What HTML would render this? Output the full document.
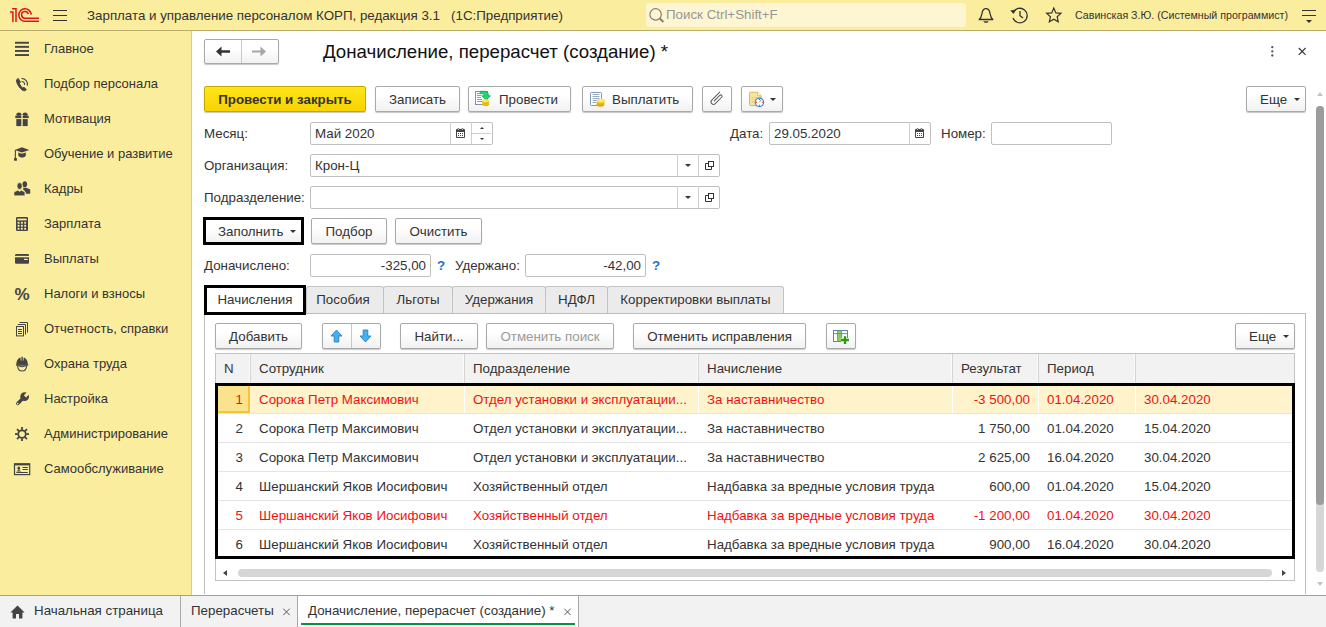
<!DOCTYPE html>
<html lang="ru">
<head>
<meta charset="utf-8">
<title>Доначисление, перерасчет (создание) *</title>
<style>
*{box-sizing:border-box;margin:0;padding:0}
html,body{width:1326px;height:627px;overflow:hidden;background:#fff;font-family:"Liberation Sans",sans-serif;font-size:13.33px;color:#333}
.abs{position:absolute}
#top{position:absolute;left:0;top:0;width:1326px;height:31px;background:#fbed9e;border-bottom:1px solid #b9ad6b}
#side{position:absolute;left:0;top:31px;width:192px;height:564px;background:#fbed9e;border-right:1px solid #d9cc84}
#main{position:absolute;left:192px;top:31px;width:1134px;height:564px;background:#fff}
#bottom{position:absolute;left:0;top:595px;width:1326px;height:32px;background:#f2f2f2;border-top:1px solid #a0a0a0}
.t{position:absolute;white-space:nowrap;line-height:1}
.btn{position:absolute;height:26px;border:1px solid #a9a9a9;border-radius:2px;background:linear-gradient(#fff 35%,#f1f1f1);box-shadow:0 1px 1px rgba(0,0,0,.22);font-size:13.33px;color:#333;text-align:center;line-height:26px;white-space:nowrap}
.inp{position:absolute;height:23px;border:1px solid #c0c0c0;border-radius:2px;background:#fff;font-size:13.33px;line-height:22px;color:#333;white-space:nowrap;padding-left:4px}
.lbl{position:absolute;font-size:13.33px;color:#333;white-space:nowrap;line-height:16px}
.nav{position:absolute;left:44px;font-size:13px;color:#333;white-space:nowrap;line-height:16px}
.ico{position:absolute}
.tab{position:absolute;top:255px;height:27px;border:1px solid #c3c3c3;border-bottom:none;border-radius:3px 3px 0 0;background:#ebebeb;font-size:13.33px;line-height:25px;text-align:center;color:#333;white-space:nowrap}
.cell{position:absolute;font-size:13.33px;line-height:16px;white-space:nowrap;color:#333}
.red{color:#ee1212}
.caret{display:inline-block;width:0;height:0;border-left:3px solid transparent;border-right:3px solid transparent;border-top:3px solid #333;vertical-align:middle}
</style>
</head>
<body>
<div id="top">
<svg class="ico" style="left:0;top:0" width="46" height="30" viewBox="0 0 46 30" fill="none" stroke="#d9161c" stroke-width="1.5">
<path d="M12.1 8.7 H16 V21.9"/>
<path d="M10 12 H12.9 V21.9"/>
<path d="M31.2 14.6 A6.2 6.2 0 1 0 25 21.2 H39"/>
<path d="M28.2 14.2 A3.35 3.35 0 1 0 25.1 18.2 H39"/>
</svg>
<div class="abs" style="left:53px;top:10px;width:14px;height:1px;background:#333"></div>
<div class="abs" style="left:53px;top:15px;width:14px;height:1px;background:#333"></div>
<div class="abs" style="left:53px;top:20px;width:14px;height:1px;background:#333"></div>
<div class="t" style="left:87px;top:9px;font-size:13.33px;color:#333">Зарплата и управление персоналом КОРП, редакция 3.1 &nbsp; (1С:Предприятие)</div>
<div class="abs" style="left:646px;top:3px;width:320px;height:24px;background:#fef6d3;border-radius:3px"></div>
<svg class="ico" style="left:648px;top:6px" width="18" height="18" viewBox="0 0 18 18" fill="none" stroke="#85806c" stroke-width="1.2"><circle cx="7.6" cy="8.4" r="5.7"/><path d="M11.8 12.6 L15.4 16" stroke-width="2"/></svg>
<div class="t" style="left:666px;top:8px;font-size:13.33px;color:#969696">Поиск Ctrl+Shift+F</div>
<svg class="ico" style="left:977px;top:6px" width="18" height="20" viewBox="0 0 18 20" fill="none" stroke="#333" stroke-width="1.3"><path d="M2.2 13.5 H15.8 C13.6 11.6 13.4 9.6 13 7.4 C12.6 4.6 11.4 2.6 9 2.6 C6.6 2.6 5.4 4.6 5 7.4 C4.6 9.6 4.4 11.6 2.2 13.5 Z" stroke-linejoin="round"/><path d="M6.4 15.2 H11.6 C11 17.4 7 17.4 6.4 15.2 Z" fill="#333" stroke="none"/></svg>
<svg class="ico" style="left:1010px;top:5px" width="20" height="21" viewBox="0 -0.5 20 21" fill="none" stroke="#333" stroke-width="1.3"><path d="M3.2 7.2 A7.3 7.3 0 1 1 3 12.4"/><path d="M0.8 5.2 L3.4 8 L5.6 4.6 Z" fill="#333" stroke-width=".6"/><path d="M10 5.5 V10.3 L13 12.6"/></svg>
<svg class="ico" style="left:1044px;top:5px" width="20" height="20" viewBox="0 0 20 20" fill="none" stroke="#333" stroke-width="1.3" stroke-linejoin="miter"><path transform="translate(9.8 10.3) scale(0.9) translate(-10 -10.3)" d="M10 2.2 L12.3 7.6 L18 8.1 L13.7 11.9 L15 17.6 L10 14.6 L5 17.6 L6.3 11.9 L2 8.1 L7.7 7.6 Z"/></svg>
<div class="t" style="left:1075px;top:10px;font-size:10.67px;color:#333">Савинская З.Ю. (Системный программист)</div>
<div class="abs" style="left:1302px;top:10px;width:14px;height:1px;background:#333"></div>
<div class="abs" style="left:1302px;top:15px;width:14px;height:1px;background:#333"></div>
<div class="abs" style="left:1306px;top:20px;width:0;height:0;border-left:3px solid transparent;border-right:3px solid transparent;border-top:3px solid #333"></div>
</div>
<div id="side">
<div class="abs" style="left:0;top:0px;width:191px;height:35px"><svg class="ico" style="left:8px;top:5px" width="28" height="28" viewBox="0 0 28 28" fill="#444"><rect x="7" y="5.8" width="14" height="1.9"/><rect x="7" y="9.9" width="14" height="1.9"/><rect x="7" y="14" width="14" height="1.9"/><rect x="7" y="18.1" width="14" height="1.9"/></svg><div class="nav" style="top:10px">Главное</div></div>
<div class="abs" style="left:0;top:35px;width:191px;height:35px"><svg class="ico" style="left:8px;top:5px" width="28" height="28" viewBox="0 0 28 28" fill="none" stroke="#444"><path d="M10.2 7.4 C8.6 8.2 8.2 9.6 8.8 11.4 C9.8 14.4 12 17.4 14.6 19.2 C16 20.1 17.4 19.9 18.4 18.6 L16 16.4 L14.6 17 C13.4 16 12 14 11.4 12.4 L12.4 11.2 Z" fill="#444" stroke-width="1" stroke-linejoin="round"/><path d="M13.4 10.2 A3.4 3.4 0 0 1 16.6 14" stroke-width="1.1"/><path d="M13.6 7.4 A6 6 0 0 1 19.4 14.6" stroke-width="1.1"/></svg><div class="nav" style="top:10px">Подбор персонала</div></div>
<div class="abs" style="left:0;top:70px;width:191px;height:35px"><svg class="ico" style="left:8px;top:5px" width="28" height="28" viewBox="0 0 28 28" fill="#444"><rect x="7.3" y="9.6" width="6" height="2.5"/><rect x="14.7" y="9.6" width="6" height="2.5"/><rect x="8.3" y="13.1" width="5" height="7"/><rect x="14.7" y="13.1" width="5" height="7"/><ellipse cx="10.9" cy="8.2" rx="2.5" ry="1.8"/><ellipse cx="17.1" cy="8.2" rx="2.5" ry="1.8"/></svg><div class="nav" style="top:10px">Мотивация</div></div>
<div class="abs" style="left:0;top:105px;width:191px;height:35px"><svg class="ico" style="left:8px;top:5px" width="28" height="28" viewBox="0 0 28 28" fill="#444"><path d="M14 6.2 L21.3 8.9 L14 11.5 L6.7 8.9 Z"/><path d="M10.3 11.4 L14 12.7 L17.8 11.4 V14.8 C16.6 17.2 11.5 17.2 10.3 14.8 Z"/><rect x="6.8" y="9" width="1.1" height="8.6"/><rect x="6" y="17.1" width="2.9" height="2.6"/></svg><div class="nav" style="top:10px">Обучение и развитие</div></div>
<div class="abs" style="left:0;top:140px;width:191px;height:35px"><svg class="ico" style="left:8px;top:5px" width="28" height="28" viewBox="0 0 28 28" fill="#444"><ellipse cx="16.8" cy="8.2" rx="2.3" ry="3"/><path d="M15.2 11.8 H18.4 L22.2 13.6 V17.8 H18 C17.6 15.6 16 14 15.2 13.4 Z"/><ellipse cx="11.6" cy="10" rx="2.7" ry="3.4" stroke="#fbed9e" stroke-width=".8"/><path d="M6 19.8 V16 L9.8 14.2 L11.6 15.4 L13.4 14.2 L16.9 16 V19.8 Z" stroke="#fbed9e" stroke-width=".6"/></svg><div class="nav" style="top:10px">Кадры</div></div>
<div class="abs" style="left:0;top:175px;width:191px;height:35px"><svg class="ico" style="left:8px;top:4px" width="28" height="28" viewBox="0 0 28 28"><rect x="8" y="7" width="12" height="14" rx="1.2" fill="#444"/><g fill="#fbed9e"><rect x="9.4" y="8.6" width="9.2" height="1.8"/><rect x="9.6" y="11.8" width="1.9" height="1.9"/><rect x="12.9" y="11.8" width="1.9" height="1.9"/><rect x="16.2" y="11.8" width="1.9" height="1.9"/><rect x="9.6" y="14.8" width="1.9" height="1.9"/><rect x="12.9" y="14.8" width="1.9" height="1.9"/><rect x="16.2" y="14.8" width="1.9" height="1.9"/><rect x="9.6" y="17.8" width="1.9" height="1.9"/><rect x="12.9" y="17.8" width="1.9" height="1.9"/><rect x="16.2" y="17.8" width="1.9" height="1.9"/></g></svg><div class="nav" style="top:10px">Зарплата</div></div>
<div class="abs" style="left:0;top:210px;width:191px;height:35px"><svg class="ico" style="left:8px;top:4px" width="28" height="28" viewBox="0 0 28 28"><rect x="7" y="9" width="14" height="9.8" rx="1.2" fill="#444"/><rect x="7" y="10.9" width="14" height="1.4" fill="#fbed9e"/><rect x="16" y="13.8" width="3.8" height="1.2" fill="#fbed9e"/></svg><div class="nav" style="top:10px">Выплаты</div></div>
<div class="abs" style="left:0;top:245px;width:191px;height:35px"><div class="ico" style="left:14px;top:10px;width:16px;font:bold 17px/17px 'Liberation Sans',sans-serif;color:#444;text-align:center">%</div><div class="nav" style="top:10px">Налоги и взносы</div></div>
<div class="abs" style="left:0;top:280px;width:191px;height:35px"><svg class="ico" style="left:8px;top:4px" width="28" height="28" viewBox="0 0 28 28" fill="none" stroke="#444" stroke-width="1"><path d="M11.6 7.5 H19.5 V17.6"/><path d="M9.8 9.5 H17.5 V19.6"/><rect x="8.5" y="11.5" width="7" height="9.4"/><path d="M10 14.5 H14 M10 16.5 H14 M10 18.5 H14" stroke-width="1.1"/></svg><div class="nav" style="top:10px">Отчетность, справки</div></div>
<div class="abs" style="left:0;top:315px;width:191px;height:35px"><svg class="ico" style="left:8px;top:5px" width="28" height="28" viewBox="0 0 28 28"><g transform="translate(0 -1.2)"><path d="M8.4 15 C8.2 10.6 10.4 8.2 12.4 7.6 L12.9 11 H13.4 V7 H14.8 V11 H15.3 L15.8 7.6 C17.8 8.2 20 10.6 19.8 15 Z" fill="#444"/><rect x="7.8" y="14.4" width="12.6" height="1.6" rx=".8" fill="#444"/><path d="M9.6 16.2 C9.8 19.4 11.8 21.2 14.1 21.2 C16.4 21.2 18.4 19.4 18.6 16.2" fill="none" stroke="#444" stroke-width="1.1"/><path d="M9.8 15.6 C12 17.4 16.2 17.4 18.4 15.6" fill="none" stroke="#444" stroke-width="1"/></g></svg><div class="nav" style="top:10px">Охрана труда</div></div>
<div class="abs" style="left:0;top:350px;width:191px;height:35px"><svg class="ico" style="left:8px;top:5px" width="28" height="28" viewBox="0 0 28 28"><g transform="translate(16.6 10.7) rotate(45)"><circle cx="0" cy="0" r="4.4" fill="#444"/><rect x="-1.7" y="0" width="3.4" height="11.4" rx="1.7" fill="#444"/><rect x="-1.5" y="-5.5" width="3" height="5" fill="#fbed9e"/><circle cx="0" cy="9.8" r=".8" fill="#fbed9e"/></g></svg><div class="nav" style="top:10px">Настройка</div></div>
<div class="abs" style="left:0;top:385px;width:191px;height:35px"><svg class="ico" style="left:8px;top:5px" width="28" height="28" viewBox="0 0 28 28" fill="none" stroke="#444"><circle cx="14" cy="13.1" r="3.8" stroke-width="1.8"/><g stroke-width="1.8"><path d="M14 6.1 V8.7" transform="rotate(0 14 13.1)"/><path d="M14 6.1 V8.7" transform="rotate(45 14 13.1)"/><path d="M14 6.1 V8.7" transform="rotate(90 14 13.1)"/><path d="M14 6.1 V8.7" transform="rotate(135 14 13.1)"/><path d="M14 6.1 V8.7" transform="rotate(180 14 13.1)"/><path d="M14 6.1 V8.7" transform="rotate(225 14 13.1)"/><path d="M14 6.1 V8.7" transform="rotate(270 14 13.1)"/><path d="M14 6.1 V8.7" transform="rotate(315 14 13.1)"/></g></svg><div class="nav" style="top:10px">Администрирование</div></div>
<div class="abs" style="left:0;top:420px;width:191px;height:35px"><svg class="ico" style="left:8px;top:5px" width="28" height="28" viewBox="0 0 28 28" fill="none" stroke="#444"><g transform="translate(0 -1)"><rect x="6.5" y="8.8" width="15.2" height="10.8" stroke-width="1.2"/><path d="M6.5 9.5 H21.7" stroke-width="1.8"/><ellipse cx="10.8" cy="13.2" rx="1.3" ry="1.7" fill="#444" stroke="none"/><path d="M8.6 16.4 C9.2 14.8 12.4 14.8 13 16.4 Z" fill="#444" stroke="none"/><path d="M14.6 12.5 H19.8 M14.6 14.5 H19.8 M8.4 17.5 H19.8" stroke-width="1"/></g></svg><div class="nav" style="top:10px">Самообслуживание</div></div>
</div>
<div id="main">
<div class="btn" style="left:12px;top:8px;width:75px;height:25px"></div>
<div class="abs" style="left:49px;top:9px;width:1px;height:23px;background:#c8c8c8"></div>
<svg class="ico" style="left:23px;top:14px" width="16" height="13" viewBox="0 0 16 13"><path d="M1 6.5 L6.5 1.5 V5.2 H15 V7.8 H6.5 V11.5 Z" fill="#333"/></svg>
<svg class="ico" style="left:59px;top:14px" width="16" height="13" viewBox="0 0 16 13"><path d="M15 6.5 L9.5 1.5 V5.4 H1 V7.6 H9.5 V11.5 Z" fill="#a6a6a6"/></svg>
<div class="t" style="left:131px;top:12px;font-size:18.67px;color:#111">Доначисление, перерасчет (создание) *</div>
<svg class="ico" style="left:1076px;top:13px" width="8" height="14" viewBox="0 0 8 14" fill="#555"><circle cx="4.3" cy="3.2" r="1.15"/><circle cx="4.3" cy="7.4" r="1.15"/><circle cx="4.3" cy="11.5" r="1.15"/></svg>
<svg class="ico" style="left:1104px;top:14px" width="11" height="11" viewBox="0 0 11 11" stroke="#333" stroke-width="1.1"><path d="M2.8 3 L9.6 9.8 M9.6 3 L2.8 9.8"/></svg>
<div class="btn" style="left:12px;top:55px;width:162px;background:linear-gradient(#ffe619,#f7d300);border-color:#c5a800;font-weight:bold;color:#333">Провести и закрыть</div>
<div class="btn" style="left:183px;top:55px;width:85px">Записать</div>
<div class="btn" style="left:276px;top:55px;width:103px;text-align:left;padding-left:30px">Провести</div>
<div class="btn" style="left:390px;top:55px;width:111px;text-align:left;padding-left:29px">Выплатить</div>
<div class="btn" style="left:510px;top:55px;width:30px"></div>
<div class="btn" style="left:549px;top:55px;width:42px"></div>
<div class="btn" style="left:1054px;top:55px;width:60px;text-align:left;padding-left:13px">Еще</div>
<div class="caret abs" style="left:1102px;top:67px"></div>
<div class="caret abs" style="left:578px;top:67px"></div>
<div class="lbl" style="left:12px;top:95px">Месяц:</div>
<div class="inp" style="left:118px;top:91px;width:183px">Май 2020</div>
<div class="abs" style="left:258px;top:91px;width:1px;height:22px;background:#d0d0d0"></div>
<div class="abs" style="left:279px;top:91px;width:1px;height:22px;background:#d0d0d0"></div>
<div class="abs" style="left:280px;top:102px;width:19px;height:1px;background:#d0d0d0"></div>
<div class="abs" style="left:288px;top:96px;width:0;height:0;border-left:2px solid transparent;border-right:2px solid transparent;border-bottom:2px solid #333"></div>
<div class="abs" style="left:288px;top:107px;width:0;height:0;border-left:2px solid transparent;border-right:2px solid transparent;border-top:2px solid #333"></div>
<div class="lbl" style="left:538px;top:95px">Дата:</div>
<div class="inp" style="left:577px;top:91px;width:162px">29.05.2020</div>
<div class="abs" style="left:717px;top:91px;width:1px;height:22px;background:#d0d0d0"></div>
<div class="lbl" style="left:749px;top:95px">Номер:</div>
<div class="inp" style="left:799px;top:91px;width:121px"></div>
<div class="lbl" style="left:12px;top:127px">Организация:</div>
<div class="inp" style="left:118px;top:123px;width:410px">Крон-Ц</div>
<div class="abs" style="left:485px;top:123px;width:1px;height:22px;background:#d0d0d0"></div>
<div class="abs" style="left:506px;top:123px;width:1px;height:22px;background:#d0d0d0"></div>
<div class="caret abs" style="left:493px;top:133px"></div>
<svg class="ico" style="left:512px;top:129px" width="11" height="11" viewBox="0 0 11 11" fill="none" stroke="#333" stroke-width="1"><rect x="4.5" y="1.5" width="5" height="5" fill="#fff"/><path d="M4.5 3.5 H1.5 V9.5 H7.5 V6.5"/></svg>
<div class="lbl" style="left:12px;top:159px">Подразделение:</div>
<div class="inp" style="left:118px;top:155px;width:410px"></div>
<div class="abs" style="left:485px;top:155px;width:1px;height:22px;background:#d0d0d0"></div>
<div class="abs" style="left:506px;top:155px;width:1px;height:22px;background:#d0d0d0"></div>
<div class="caret abs" style="left:493px;top:165px"></div>
<svg class="ico" style="left:512px;top:161px" width="11" height="11" viewBox="0 0 11 11" fill="none" stroke="#333" stroke-width="1"><rect x="4.5" y="1.5" width="5" height="5" fill="#fff"/><path d="M4.5 3.5 H1.5 V9.5 H7.5 V6.5"/></svg>
<div class="btn" style="left:11px;top:186px;width:101px;height:28px;border:3px solid #000;border-radius:0;text-align:left;padding-left:12px;line-height:24px;box-shadow:none">Заполнить</div>
<div class="caret abs" style="left:98px;top:199px"></div>
<div class="btn" style="left:119px;top:187px;width:76px">Подбор</div>
<div class="btn" style="left:203px;top:187px;width:87px">Очистить</div>
<div class="lbl" style="left:12px;top:227px">Доначислено:</div>
<div class="inp" style="left:118px;top:223px;width:121px;text-align:right;padding-right:4px">-325,00</div>
<div class="lbl" style="left:245px;top:227px;color:#1a73c8;font-weight:bold">?</div>
<div class="lbl" style="left:263px;top:227px">Удержано:</div>
<div class="inp" style="left:333px;top:223px;width:121px;text-align:right;padding-right:4px">-42,00</div>
<div class="lbl" style="left:460px;top:227px;color:#1a73c8;font-weight:bold">?</div>
<div class="abs" style="left:12px;top:282px;width:1102px;height:281px;border:1px solid #bdbdbd;border-bottom:none"></div>
<div class="tab" style="left:114px;width:78px;padding-right:4px">Пособия</div>
<div class="tab" style="left:191px;width:70px">Льготы</div>
<div class="tab" style="left:260px;width:94px">Удержания</div>
<div class="tab" style="left:353px;width:63px">НДФЛ</div>
<div class="tab" style="left:415px;width:177px">Корректировки выплаты</div>
<div class="abs" style="left:12px;top:254px;width:102px;height:30px;border:3px solid #000;background:#fff;font-size:13.33px;line-height:23px;text-align:center;color:#333">Начисления</div>
<div class="btn" style="left:23px;top:292px;width:87px;">Добавить</div>
<div class="btn" style="left:130px;top:292px;width:59px;"></div>
<div class="abs" style="left:159px;top:293px;width:1px;height:24px;background:#c8c8c8"></div>
<div class="btn" style="left:208px;top:292px;width:78px;">Найти...</div>
<div class="btn" style="left:294px;top:292px;width:128px;color:#9a9a9a">Отменить поиск</div>
<div class="btn" style="left:441px;top:292px;width:173px;">Отменить исправления</div>
<div class="btn" style="left:634px;top:292px;width:30px;"></div>
<div class="btn" style="left:1043px;top:292px;width:60px;text-align:left;padding-left:13px">Еще</div>
<div class="caret abs" style="left:1091px;top:304px"></div>
<svg class="ico" style="left:138px;top:298px" width="13" height="14" viewBox="0 0 13 14"><path d="M6.5 1 L12 7 H8.8 V13 H4.2 V7 H1 Z" fill="#45b0f0" stroke="#2c80ba" stroke-width=".9" stroke-linejoin="miter"/></svg>
<svg class="ico" style="left:167px;top:298px" width="13" height="14" viewBox="0 0 13 14"><path d="M6.5 13 L12 7 H8.8 V1 H4.2 V7 H1 Z" fill="#45b0f0" stroke="#2c80ba" stroke-width=".9" stroke-linejoin="miter"/></svg>
<div class="abs" style="left:23px;top:322px;width:1080px;height:228px;border:1px solid #c3c3c3;background:#fff"></div>
<div class="abs" style="left:24px;top:323px;width:1078px;height:29px;background:#f2f2f2"></div>
<div class="cell" style="left:32px;top:330px">N</div>
<div class="abs" style="left:57px;top:323px;width:1px;height:29px;background:#fbfbfb"></div><div class="abs" style="left:58px;top:323px;width:1px;height:29px;background:#d5d5d5"></div>
<div class="cell" style="left:67px;top:330px">Сотрудник</div>
<div class="abs" style="left:271px;top:323px;width:1px;height:29px;background:#fbfbfb"></div><div class="abs" style="left:272px;top:323px;width:1px;height:29px;background:#d5d5d5"></div>
<div class="cell" style="left:281px;top:330px">Подразделение</div>
<div class="abs" style="left:505px;top:323px;width:1px;height:29px;background:#fbfbfb"></div><div class="abs" style="left:506px;top:323px;width:1px;height:29px;background:#d5d5d5"></div>
<div class="cell" style="left:515px;top:330px">Начисление</div>
<div class="abs" style="left:759px;top:323px;width:1px;height:29px;background:#fbfbfb"></div><div class="abs" style="left:760px;top:323px;width:1px;height:29px;background:#d5d5d5"></div>
<div class="cell" style="left:769px;top:330px">Результат</div>
<div class="abs" style="left:845px;top:323px;width:1px;height:29px;background:#fbfbfb"></div><div class="abs" style="left:846px;top:323px;width:1px;height:29px;background:#d5d5d5"></div>
<div class="cell" style="left:855px;top:330px">Период</div>
<div class="abs" style="left:942px;top:323px;width:1px;height:29px;background:#fbfbfb"></div><div class="abs" style="left:943px;top:323px;width:1px;height:29px;background:#d5d5d5"></div>
<div class="abs" style="left:26px;top:355px;width:1074px;height:27px;background:#fff3cc"></div>
<div class="abs" style="left:272px;top:355px;width:1px;height:27px;background:#fff"></div>
<div class="abs" style="left:506px;top:355px;width:1px;height:27px;background:#fff"></div>
<div class="abs" style="left:760px;top:355px;width:1px;height:27px;background:#fff"></div>
<div class="abs" style="left:846px;top:355px;width:1px;height:27px;background:#fff"></div>
<div class="abs" style="left:943px;top:355px;width:1px;height:27px;background:#fff"></div>
<div class="abs" style="left:26px;top:355px;width:32px;height:27px;background:#fbe38e;border-right:2px solid #f6c33a;border-bottom:2px solid #f6c33a"></div>
<div class="cell red" style="left:23px;top:361px;width:28px;text-align:right">1</div>
<div class="cell red" style="left:67px;top:361px">Сорока Петр Максимович</div>
<div class="cell red" style="left:281px;top:361px">Отдел установки и эксплуатации...</div>
<div class="cell red" style="left:515px;top:361px">За наставничество</div>
<div class="cell red" style="left:761px;top:361px;width:77px;text-align:right">-3 500,00</div>
<div class="cell red" style="left:855px;top:361px">01.04.2020</div>
<div class="cell red" style="left:952px;top:361px">30.04.2020</div>
<div class="abs" style="left:26px;top:382px;width:1074px;height:1px;background:#e4e4e4"></div>
<div class="cell" style="left:23px;top:390px;width:28px;text-align:right">2</div>
<div class="cell" style="left:67px;top:390px">Сорока Петр Максимович</div>
<div class="cell" style="left:281px;top:390px">Отдел установки и эксплуатации...</div>
<div class="cell" style="left:515px;top:390px">За наставничество</div>
<div class="cell" style="left:761px;top:390px;width:77px;text-align:right">1 750,00</div>
<div class="cell" style="left:855px;top:390px">01.04.2020</div>
<div class="cell" style="left:952px;top:390px">15.04.2020</div>
<div class="abs" style="left:26px;top:411px;width:1074px;height:1px;background:#e4e4e4"></div>
<div class="cell" style="left:23px;top:419px;width:28px;text-align:right">3</div>
<div class="cell" style="left:67px;top:419px">Сорока Петр Максимович</div>
<div class="cell" style="left:281px;top:419px">Отдел установки и эксплуатации...</div>
<div class="cell" style="left:515px;top:419px">За наставничество</div>
<div class="cell" style="left:761px;top:419px;width:77px;text-align:right">2 625,00</div>
<div class="cell" style="left:855px;top:419px">16.04.2020</div>
<div class="cell" style="left:952px;top:419px">30.04.2020</div>
<div class="abs" style="left:26px;top:440px;width:1074px;height:1px;background:#e4e4e4"></div>
<div class="cell" style="left:23px;top:448px;width:28px;text-align:right">4</div>
<div class="cell" style="left:67px;top:448px">Шершанский Яков Иосифович</div>
<div class="cell" style="left:281px;top:448px">Хозяйственный отдел</div>
<div class="cell" style="left:515px;top:448px">Надбавка за вредные условия труда</div>
<div class="cell" style="left:761px;top:448px;width:77px;text-align:right">600,00</div>
<div class="cell" style="left:855px;top:448px">01.04.2020</div>
<div class="cell" style="left:952px;top:448px">15.04.2020</div>
<div class="abs" style="left:26px;top:469px;width:1074px;height:1px;background:#e4e4e4"></div>
<div class="cell red" style="left:23px;top:477px;width:28px;text-align:right">5</div>
<div class="cell red" style="left:67px;top:477px">Шершанский Яков Иосифович</div>
<div class="cell red" style="left:281px;top:477px">Хозяйственный отдел</div>
<div class="cell red" style="left:515px;top:477px">Надбавка за вредные условия труда</div>
<div class="cell red" style="left:761px;top:477px;width:77px;text-align:right">-1 200,00</div>
<div class="cell red" style="left:855px;top:477px">01.04.2020</div>
<div class="cell red" style="left:952px;top:477px">30.04.2020</div>
<div class="abs" style="left:26px;top:498px;width:1074px;height:1px;background:#e4e4e4"></div>
<div class="cell" style="left:23px;top:506px;width:28px;text-align:right">6</div>
<div class="cell" style="left:67px;top:506px">Шершанский Яков Иосифович</div>
<div class="cell" style="left:281px;top:506px">Хозяйственный отдел</div>
<div class="cell" style="left:515px;top:506px">Надбавка за вредные условия труда</div>
<div class="cell" style="left:761px;top:506px;width:77px;text-align:right">900,00</div>
<div class="cell" style="left:855px;top:506px">16.04.2020</div>
<div class="cell" style="left:952px;top:506px">30.04.2020</div>
<div class="abs" style="left:23px;top:352px;width:1080px;height:176px;border:3px solid #000"></div>
<div class="abs" style="left:46px;top:538px;width:1034px;height:8px;border-radius:4px;background:#d6d6d6"></div>
<div class="abs" style="left:31px;top:539px;width:0;height:0;border-top:3px solid transparent;border-bottom:3px solid transparent;border-right:4px solid #444"></div>
<div class="abs" style="left:1090px;top:539px;width:0;height:0;border-top:3px solid transparent;border-bottom:3px solid transparent;border-left:4px solid #444"></div>
<div class="abs" style="left:1124px;top:75px;width:8px;height:466px;border-radius:4px;background:#d6d6d6"></div>
<div class="abs" style="left:1124px;top:75px;width:8px;height:399px;border-radius:4px;background:#9c9c9c"></div>
<div class="abs" style="left:1125px;top:61px;width:0;height:0;border-left:3px solid transparent;border-right:3px solid transparent;border-bottom:4px solid #c4c4c4"></div>
<div class="abs" style="left:1125px;top:551px;width:0;height:0;border-left:3px solid transparent;border-right:3px solid transparent;border-top:4px solid #c4c4c4"></div>
<svg class="ico" style="left:264px;top:97px" width="10" height="11" viewBox="0 0 10 11"><rect x="0" y="1" width="9" height="9" rx="1" fill="#444"/><rect x="1" y="4" width="7" height="5" fill="#fff"/><rect x="1.6" y="0.1" width="1.8" height="2.2" rx=".9" fill="#444"/><rect x="5.6" y="0.1" width="1.8" height="2.2" rx=".9" fill="#444"/><rect x="2.1" y="0.7" width=".8" height="1.2" fill="#fff"/><rect x="6.1" y="0.7" width=".8" height="1.2" fill="#fff"/><g fill="#444"><rect x="2" y="5" width="1" height="1"/><rect x="4" y="5" width="1" height="1"/><rect x="6" y="5" width="1" height="1"/><rect x="2" y="7" width="1" height="1"/><rect x="4" y="7" width="1" height="1"/><rect x="6" y="7" width="1" height="1"/></g></svg>
<svg class="ico" style="left:723px;top:97px" width="10" height="11" viewBox="0 0 10 11"><rect x="0" y="1" width="9" height="9" rx="1" fill="#444"/><rect x="1" y="4" width="7" height="5" fill="#fff"/><rect x="1.6" y="0.1" width="1.8" height="2.2" rx=".9" fill="#444"/><rect x="5.6" y="0.1" width="1.8" height="2.2" rx=".9" fill="#444"/><rect x="2.1" y="0.7" width=".8" height="1.2" fill="#fff"/><rect x="6.1" y="0.7" width=".8" height="1.2" fill="#fff"/><g fill="#444"><rect x="2" y="5" width="1" height="1"/><rect x="4" y="5" width="1" height="1"/><rect x="6" y="5" width="1" height="1"/><rect x="2" y="7" width="1" height="1"/><rect x="4" y="7" width="1" height="1"/><rect x="6" y="7" width="1" height="1"/></g></svg>
<svg class="ico" style="left:282px;top:59px" width="18" height="18" viewBox="0 0 18 18">
<rect x="1.5" y="1.5" width="12" height="13" fill="#fff" stroke="#7f90aa" stroke-width="1"/>
<path d="M3 3.5 H6 M3 5.5 H7 M3 7.5 H7 M3 9.5 H8 M3 11.5 H8" stroke="#8a9ab3" stroke-width="1"/>
<path d="M6.3 1.3 H11 C13.4 1.3 14.4 3 14.4 5.8 H16.4 L12.1 10.3 L7.8 5.8 H10.2 C10.2 4.4 9.8 3.8 8.6 3.8 H6.3 Z" fill="#1fd676" stroke="#10a555" stroke-width=".8" stroke-linejoin="round"/>
<path d="M8.4 10.6 V14.8 C8.4 16.6 15 16.6 15 14.8 V10.6 Z" fill="#f3c81e"/>
<ellipse cx="11.7" cy="10.6" rx="3.3" ry="1.3" fill="#ffe66a"/>
<path d="M8.4 12.4 C8.4 14 15 14 15 12.4 M8.4 14 C8.4 15.6 15 15.6 15 14" stroke="#d9a400" stroke-width=".7" fill="none"/>
</svg>
<svg class="ico" style="left:397px;top:60px" width="18" height="18" viewBox="0 0 18 18">
<rect x="1.5" y="1.5" width="11" height="13" rx="0.8" fill="#fff" stroke="#7f9ab8" stroke-width="1"/>
<path d="M3.5 3.5 H10.5 M3.5 5.5 H10.5 M3.5 7.5 H10.5 M3.5 9.5 H8 M3.5 11.5 H7.5" stroke="#97a9bd" stroke-width="1"/>
<ellipse cx="11.4" cy="13.6" rx="3.9" ry="2" fill="#e8b010"/>
<ellipse cx="11.6" cy="11.8" rx="3.9" ry="2" fill="#f3c81e"/>
<ellipse cx="12" cy="9.8" rx="3.9" ry="2" fill="#ffd735"/>
<ellipse cx="12" cy="9.4" rx="3" ry="1.3" fill="#ffe97a"/>
<path d="M7.8 12 C8.6 13.6 14.4 13.6 15.4 12 M7.6 13.8 C8.6 15.4 14.2 15.4 15.2 13.8" stroke="#c99400" stroke-width=".6" fill="none"/>
</svg>
<svg class="ico" style="left:516px;top:58px" width="18" height="19" viewBox="0 0 18 19" fill="none" stroke="#5a5a5a" stroke-width="1" stroke-linecap="round">
<path transform="translate(8.8 9.6) rotate(45)" d="M-2.5 -6.6 V4.6 A2.5 2.5 0 0 0 2.5 4.6 V-4.4 A1.35 1.35 0 0 0 -0.2 -4.4 V3.4"/></svg>
<svg class="ico" style="left:556px;top:60px" width="18" height="17" viewBox="0 0 18 17">
<path d="M1.5 2.2 C1.5 1.6 1.9 1.2 2.5 1.2 H9.6 L13.2 4.8 V13.6 C13.2 14.2 12.8 14.6 12.2 14.6 H2.5 C1.9 14.6 1.5 14.2 1.5 13.6 Z" fill="#f6e59f" stroke="#dcb84a" stroke-width="1"/>
<path d="M9.6 1.2 V4.8 H13.2" fill="#fff7d0" stroke="#dcb84a" stroke-width=".8"/>
<path d="M3.6 6.5 H5.5 M6.5 6.5 H9 M3.6 8.7 H4.6 M5.6 8.7 H8 M3.6 10.9 H6.5" stroke="#d8c27a" stroke-width=".9"/>
<circle cx="11.4" cy="11.3" r="4.2" fill="#fff" stroke="#3d7fc4" stroke-width="1.1"/>
<g fill="#e8161e"><rect x="10.9" y="7.9" width="1" height="1"/><rect x="10.9" y="13.7" width="1" height="1"/><rect x="8" y="10.8" width="1" height="1"/><rect x="13.8" y="10.8" width="1" height="1"/></g>
<path d="M11.4 11.3 L13 9" stroke="#7aa0d8" stroke-width="1"/>
</svg>
<svg class="ico" style="left:640px;top:298px" width="19" height="17" viewBox="0 0 19 17">
<rect x="1.5" y="1.5" width="14" height="11" fill="#fff" stroke="#5f86a6" stroke-width="1"/>
<rect x="6" y="2" width="3.2" height="10" fill="#8cd05a"/>
<path d="M1.5 4.6 H15.5 M5.6 1.5 V12.5 M9.6 1.5 V12.5" stroke="#5f86a6" stroke-width=".9"/>
<path d="M13 7.2 V15 M9 11 H17" stroke="#fff" stroke-width="4"/>
<path d="M13 7.2 V15 M9 11 H17" stroke="#2e9a12" stroke-width="2.4"/>
</svg>
</div>
<div id="bottom">
<svg class="ico" style="left:10px;top:9px" width="15" height="14" viewBox="0 0 15 14"><path d="M7.5 0.6 L14.6 7.4 H12.4 V13.4 H9 V9 H6 V13.4 H2.6 V7.4 H0.4 Z" fill="#444"/></svg>
<div class="t" style="left:34px;top:8px;font-size:13.33px">Начальная страница</div>
<div class="abs" style="left:180px;top:0;width:1px;height:31px;background:#a8a8a8"></div>
<div class="t" style="left:191px;top:8px;font-size:13.33px">Перерасчеты</div>
<svg class="ico" style="left:282px;top:12px" width="9" height="9" viewBox="0 0 9 9" stroke="#555" stroke-width="1" fill="none"><path d="M1.3 0.7 L7.7 7.1 M7.7 0.7 L1.3 7.1"/></svg>
<div class="abs" style="left:297px;top:0;width:1px;height:31px;background:#a8a8a8"></div>
<div class="abs" style="left:298px;top:0;width:280px;height:31px;background:#fff"></div>
<div class="abs" style="left:578px;top:0;width:1px;height:31px;background:#a8a8a8"></div>
<div class="abs" style="left:301px;top:27px;width:274px;height:2px;background:#009646"></div>
<div class="t" style="left:308px;top:8px;font-size:13.33px">Доначисление, перерасчет (создание) *</div>
<svg class="ico" style="left:563px;top:12px" width="9" height="9" viewBox="0 0 9 9" stroke="#555" stroke-width="1" fill="none"><path d="M1.3 0.7 L7.7 7.1 M7.7 0.7 L1.3 7.1"/></svg>
</div>
</body>
</html>
